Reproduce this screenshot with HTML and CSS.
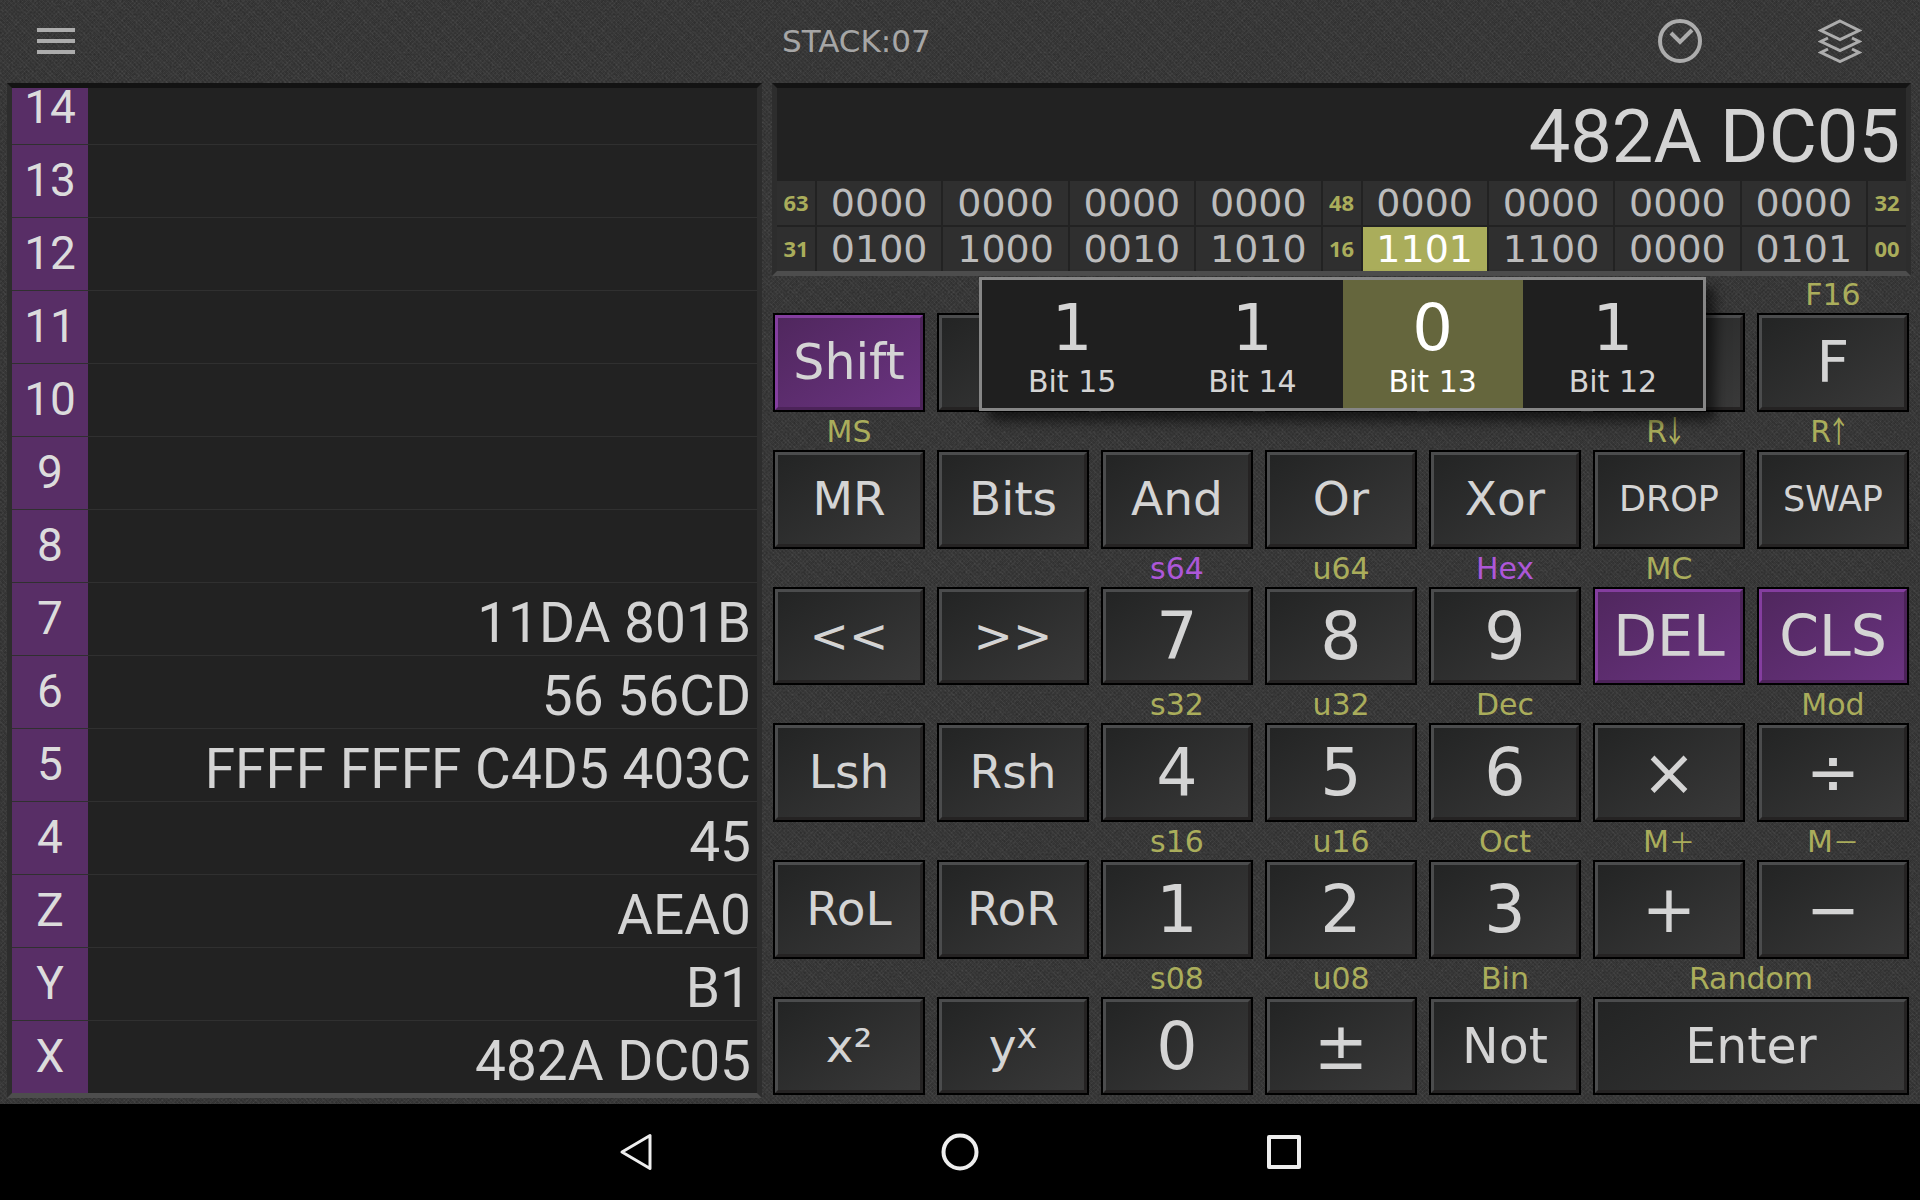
FILE: index.html
```
<!DOCTYPE html>
<html lang="en">
<head>
  <meta charset="UTF-8">
  <meta name="viewport" content="width=device-width, initial-scale=1.0">
  <title>Programmer Calculator</title>
  <link rel="stylesheet" href="styles.css">
</head>
<body>
  <div class="app">
    <header class="topbar">
      <button class="icon-btn" aria-label="Menu">
        <svg width="38" height="26" viewBox="0 0 38 26" fill="#acacac"><path d="M0 0h38v4H0zM0 11h38v4H0zM0 22h38v4H0z"/></svg>
      </button>
      <span class="status">STACK:07</span>
      <button class="icon-btn" aria-label="History">
        <svg width="44" height="44" viewBox="0 0 44 44" fill="none" stroke="#acacac" stroke-width="4"><circle cx="22" cy="22" r="20"/><path d="M13 14l9 9 12-12"/></svg>
      </button>
      <button class="icon-btn" aria-label="Stack">
        <svg width="44" height="44" viewBox="0 0 44 44" fill="none" stroke="#acacac" stroke-width="3"><path d="M22 2L41 11.500 22 20.500 3 11.500z"/><path d="M10 19l-7 3.500 19 9 19-9-7-3.500"/><path d="M10 30l-7 3.500 19 9 19-9-7-3.500"/></svg>
      </button>
    </header>

    <main class="content">
      <table class="stack inset">
        <tbody>
          <tr><th scope="row">14</th><td></td></tr>
          <tr><th scope="row">13</th><td></td></tr>
          <tr><th scope="row">12</th><td></td></tr>
          <tr><th scope="row">11</th><td></td></tr>
          <tr><th scope="row">10</th><td></td></tr>
          <tr><th scope="row">9</th><td></td></tr>
          <tr><th scope="row">8</th><td></td></tr>
          <tr><th scope="row">7</th><td>11DA 801B</td></tr>
          <tr><th scope="row">6</th><td>56 56CD</td></tr>
          <tr><th scope="row">5</th><td>FFFF FFFF C4D5 403C</td></tr>
          <tr><th scope="row">4</th><td>45</td></tr>
          <tr><th scope="row">Z</th><td>AEA0</td></tr>
          <tr><th scope="row">Y</th><td>B1</td></tr>
          <tr><th scope="row">X</th><td>482A DC05</td></tr>
        </tbody>
      </table>

      <section class="calc">
        <div class="display inset">
          <output class="result">482A DC05</output>
          <div class="bits">
            <span class="pos">63</span>
            <button>0000</button><button>0000</button><button>0000</button><button>0000</button>
            <span class="pos">48</span>
            <button>0000</button><button>0000</button><button>0000</button><button>0000</button>
            <span class="pos">32</span>
            <span class="pos">31</span>
            <button>0100</button><button>1000</button><button>0010</button><button>1010</button>
            <span class="pos">16</span>
            <button class="active">1101</button><button>1100</button><button>0000</button><button>0101</button>
            <span class="pos">00</span>
          </div>
        </div>

        <div class="keypad">
          <div class="key"><span></span><button class="purple medium">Shift</button></div>
          <div class="key"><span></span><button aria-label="A"></button></div>
          <div class="key"><span></span><button aria-label="B"></button></div>
          <div class="key"><span></span><button aria-label="C"></button></div>
          <div class="key"><span></span><button aria-label="D"></button></div>
          <div class="key"><span></span><button aria-label="E"></button></div>
          <div class="key"><span>F16</span><button class="large">F</button></div>

          <div class="key"><span>MS</span><button>MR</button></div>
          <div class="key"><span></span><button>Bits</button></div>
          <div class="key"><span></span><button>And</button></div>
          <div class="key"><span></span><button>Or</button></div>
          <div class="key"><span></span><button>Xor</button></div>
          <div class="key"><span>R￬&nbsp;</span><button class="small">DROP</button></div>
          <div class="key"><span>R￪&nbsp;</span><button class="small">SWAP</button></div>

          <div class="key"><span></span><button>&lt;&lt;</button></div>
          <div class="key"><span></span><button>&gt;&gt;</button></div>
          <div class="key"><span class="on">s64</span><button class="digit">7</button></div>
          <div class="key"><span>u64</span><button class="digit">8</button></div>
          <div class="key"><span class="on">Hex</span><button class="digit">9</button></div>
          <div class="key"><span>MC</span><button class="purple large">DEL</button></div>
          <div class="key"><span></span><button class="purple large">CLS</button></div>

          <div class="key"><span></span><button>Lsh</button></div>
          <div class="key"><span></span><button>Rsh</button></div>
          <div class="key"><span>s32</span><button class="digit">4</button></div>
          <div class="key"><span>u32</span><button class="digit">5</button></div>
          <div class="key"><span>Dec</span><button class="digit">6</button></div>
          <div class="key"><span></span><button class="digit">×</button></div>
          <div class="key"><span>Mod</span><button class="digit">÷</button></div>

          <div class="key"><span></span><button>RoL</button></div>
          <div class="key"><span></span><button>RoR</button></div>
          <div class="key"><span>s16</span><button class="digit">1</button></div>
          <div class="key"><span>u16</span><button class="digit">2</button></div>
          <div class="key"><span>Oct</span><button class="digit">3</button></div>
          <div class="key"><span>M<small>＋</small></span><button class="digit">+</button></div>
          <div class="key"><span>M<small>－</small></span><button class="digit">−</button></div>

          <div class="key"><span></span><button>x²</button></div>
          <div class="key"><span></span><button>y<sup>x</sup></button></div>
          <div class="key"><span>s08</span><button class="digit">0</button></div>
          <div class="key"><span>u08</span><button class="digit">±</button></div>
          <div class="key"><span>Bin</span><button class="medium">Not</button></div>
          <div class="key wide"><span>Random</span><button class="medium">Enter</button></div>
        </div>

        <!-- single bit editor for the selected nibble -->
        <div class="popup">
          <button><b>1</b>Bit 15</button>
          <button><b>1</b>Bit 14</button>
          <button class="active"><b>0</b>Bit 13</button>
          <button><b>1</b>Bit 12</button>
        </div>
      </section>
    </main>
  </div>

  <nav class="navbar">
    <button aria-label="Back">
      <svg width="40" height="40" viewBox="0 0 40 40" fill="none" stroke="#eee" stroke-width="3" stroke-linejoin="round"><path d="M34 3.500v33L6 20z"/></svg>
    </button>
    <button aria-label="Home">
      <svg width="40" height="40" viewBox="0 0 40 40" fill="none" stroke="#eee" stroke-width="4"><circle cx="20" cy="20" r="16.500"/></svg>
    </button>
    <button aria-label="Recent apps">
      <svg width="40" height="40" viewBox="0 0 40 40" fill="none" stroke="#eee" stroke-width="4" stroke-linejoin="round"><path d="M5 5h30v30H5z"/></svg>
    </button>
  </nav>
</body>
</html>
```
FILE: styles.css
```
* {
  box-sizing: border-box;
}
body {
  display: flex;
  flex-direction: column;
  height: 100vh;
  margin: 0;
  background: #000;
  color: #d4d4d4;
  font-family: "DejaVu Sans", "Noto Sans CJK JP", sans-serif;
  overflow: hidden;
}
button {
  padding: 0;
  border: none;
  background: none;
  color: inherit;
  font-family: inherit;
  cursor: pointer;
}
svg {
  display: block;
}
.app {
  flex: 1;
  min-height: 0;
  display: flex;
  flex-direction: column;
  background-color: #3a3a3a;
  background-image:
    url("data:image/svg+xml,%3Csvg xmlns='http://www.w3.org/2000/svg' width='160' height='160'%3E%3Cfilter id='n'%3E%3CfeTurbulence type='fractalNoise' baseFrequency='.5' numOctaves='3' stitchTiles='stitch'/%3E%3CfeColorMatrix values='0 0 0 0 0 0 0 0 0 0 0 0 0 0 0 .4 0 0 0 -.1'/%3E%3C/filter%3E%3Crect width='160' height='160' filter='url(%23n)'/%3E%3C/svg%3E"),
    repeating-linear-gradient(45deg, rgba(255, 255, 255, 0.04) 0 1px, transparent 1px 3px),
    repeating-linear-gradient(-45deg, rgba(255, 255, 255, 0.03) 0 1px, transparent 1px 3px);
}

/* top bar */
.topbar {
  height: 83px;
  display: grid;
  grid-template-columns: 112px 1fr 160px 160px;
  align-items: center;
  padding-bottom: 2px;
}
.icon-btn {
  display: flex;
  justify-content: center;
}
.status {
  padding-left: 670px;
  color: #a6a6a6;
  font-size: 31px;
}

/* panels */
.content {
  flex: 1;
  min-height: 0;
  display: grid;
  grid-template-columns: 755fr 1139fr;
  gap: 10px;
  padding: 0 9px 6px 7px;
}
.inset {
  border: 5px solid;
  border-color: #131313 #2d2d2d #4d4d4d;
  background: #222;
}
.stack {
  display: flex;
  flex-direction: column;
  justify-content: flex-end;
  overflow: hidden;
  font-family: Roboto, sans-serif;
}
.stack tbody {
  display: block;
}
.stack tr {
  display: flex;
  height: 73px;
  border-top: 1px solid #303030;
}
.stack th {
  width: 76px;
  padding: 0;
  background: #582e66;
  color: #dcdcdc;
  font-size: 46px;
  font-weight: normal;
  line-height: 71px;
}
.stack td {
  flex: 1;
  padding: 4px 6px 0;
  font-size: 55px;
  line-height: 72px;
  text-align: right;
}

.calc {
  position: relative;
  min-height: 0;
  display: flex;
  flex-direction: column;
}
.result {
  display: block;
  height: 93px;
  padding: 5px 6px 0;
  font-family: Roboto, sans-serif;
  font-size: 74px;
  line-height: 88px;
  text-align: right;
}
.bits {
  display: grid;
  grid-template-columns: 38px repeat(4, 1fr) 38px repeat(4, 1fr) 38px;
  grid-auto-rows: 44px;
  gap: 2px;
}
.bits > * {
  background: #2f2f2f;
  color: #bcbcbc;
  font-size: 38px;
  line-height: 42px;
  text-align: center;
}
.bits .pos {
  color: #aaad5b;
  font-family: "Noto Sans", "Open Sans", sans-serif;
  font-size: 22px;
  font-weight: bold;
  line-height: 43px;
}
.bits .active {
  background: #aaad5b;
  color: #fff;
}

/* keys */
.keypad {
  flex: 1;
  min-height: 0;
  display: grid;
  grid-template-columns: repeat(7, 1fr);
  grid-template-rows: repeat(5, 273fr) 271fr;
  gap: 1px 12px;
  padding: 0 2px 3px 1px;
}
.key {
  display: flex;
  flex-direction: column;
  text-align: center;
}
.key.wide {
  grid-column: span 2;
}
.key span {
  height: 37px;
  color: #aaad5b;
  font-size: 30px;
  line-height: 37px;
}
.key small {
  font-size: 26px;
  line-height: 1;
}
.key sup {
  font-size: 35px;
  line-height: 0;
  vertical-align: 14px;
}
.key .on {
  color: #ad57d8;
}
.key button {
  flex: 1;
  border: 3px solid;
  border-color: #4b4c4d #252323 #252323 #4b4c4d;
  margin: 2px;
  padding-bottom: 2px;
  outline: 2px solid #000;
  background: linear-gradient(145deg, #232424, #393939);
  font-size: 47px;
  line-height: 1;
}
.key .purple {
  border-color: #843e9f #4c2359 #4c2359 #843e9f;
  background: linear-gradient(145deg, #50275e, #6a3380);
}
.key .small {
  padding: 0;
  font-size: 35px;
}
.key .medium {
  padding: 0;
  font-size: 49px;
}
.key .large {
  padding: 1px 0 0;
  font-size: 57px;
}
.key .digit {
  padding: 0;
  font-size: 65px;
}

.popup {
  position: absolute;
  top: 194px;
  left: 207px;
  right: 205px;
  display: flex;
  height: 134px;
  border: 3px solid #868686;
  background: #1f1f1f;
  box-shadow: 9px 10px 12px rgba(0, 0, 0, 0.6);
}
.popup button {
  flex: 1;
  padding-top: 3px;
  font-size: 30px;
  line-height: 36px;
}
.popup b {
  display: block;
  font-size: 64px;
  font-weight: normal;
  line-height: 72px;
}
.popup .active {
  background: #65663d;
  color: #fff;
}

/* system navigation */
.navbar {
  display: flex;
  justify-content: center;
  align-items: center;
  gap: 284px;
  height: 96px;
}
```
